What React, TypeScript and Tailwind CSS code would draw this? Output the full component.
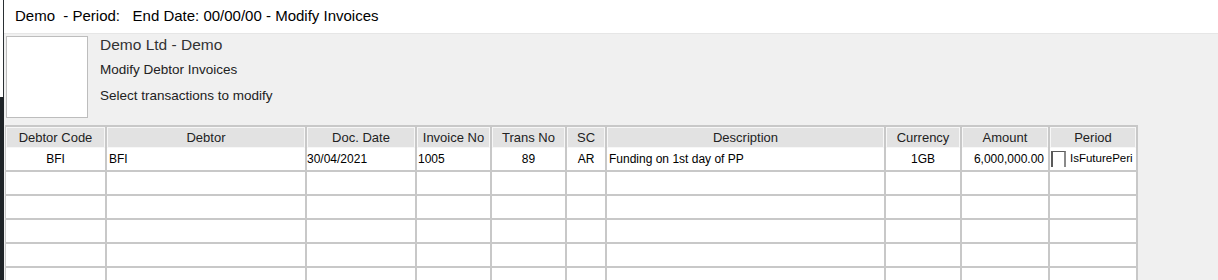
import React from "react";

type Align = "left" | "center" | "right";

const COLS: { label: string; width: number; align: Align; pad: string }[] = [
  { label: "Debtor Code", width: 101, align: "center", pad: "" },
  { label: "Debtor", width: 200, align: "left", pad: "pl-[2px]" },
  { label: "Doc. Date", width: 110, align: "left", pad: "pl-0" },
  { label: "Invoice No", width: 75, align: "left", pad: "pl-[1px]" },
  { label: "Trans No", width: 75, align: "center", pad: "" },
  { label: "SC", width: 40, align: "center", pad: "" },
  { label: "Description", width: 279, align: "left", pad: "pl-[2px]" },
  { label: "Currency", width: 76, align: "center", pad: "" },
  { label: "Amount", width: 88, align: "right", pad: "pr-[4px]" },
  { label: "Period", width: 88, align: "left", pad: "pl-0" },
];

const ROW: React.ReactNode[] = [
  "BFI",
  "BFI",
  "30/04/2021",
  "1005",
  "89",
  "AR",
  "Funding on 1st day of PP",
  "1GB",
  "6,000,000.00",
  null,
];

const alignClass: Record<Align, string> = {
  left: "justify-start",
  center: "justify-center",
  right: "justify-end",
};

function PeriodCell() {
  return (
    <div className="flex items-center gap-[4px] pl-[1px] whitespace-nowrap">
      <span className="block w-[15px] h-[16px] shrink-0 bg-white border-l-2 border-t border-r-2 border-[#5a5a5a] border-r-[#8a8a8a]" />
      <span className="text-[11.5px]">IsFuturePeri</span>
    </div>
  );
}

export default function App() {
  const font = { fontFamily: '"Liberation Sans", Arial, sans-serif' };
  const emptyRows = [0, 1, 2, 3, 4];

  return (
    <div className="flex w-[1218px] h-[280px] overflow-hidden bg-[#f0f0f0]" style={font}>
      {/* window edge */}
      <div className="w-[4px] flex flex-col shrink-0">
        <div className="h-[97px] shrink-0 bg-white border-r border-[#2a2f33]" />
        <div className="flex-1 bg-[#1e2327]" />
      </div>

      <div className="flex-1 flex flex-col min-h-0">
        {/* Title bar */}
        <div className="h-[33px] shrink-0 bg-white flex items-center pl-[11px] text-[15px] text-black whitespace-pre">
          Demo  - Period:   End Date: 00/00/00 - Modify Invoices
        </div>

        {/* Body */}
        <div className="flex-1 min-h-0 overflow-hidden bg-[#f0f0f0] border-t border-[#e6e6e6] pt-[2px] pl-[2px]">
          <div className="flex">
            <div className="w-[82px] h-[82px] shrink-0 bg-white border border-[#bdbdbd]" />
            <div className="ml-[12px] flex flex-col text-[#333]">
              <div className="h-[20px] -mt-[1px] flex items-center text-[15.5px]">Demo Ltd - Demo</div>
              <div className="h-[20px] mt-[5px] flex items-center text-[13.5px] text-[#222]">Modify Debtor Invoices</div>
              <div className="h-[20px] mt-[6px] flex items-center text-[13.5px] text-[#222]">Select transactions to modify</div>
            </div>
          </div>

          {/* Grid */}
          <div className="mt-[7px] -ml-[1px] w-max border-l border-t-2 border-[#c8c8c8]">
            <div className="flex">
              {COLS.map((c) => (
                <div
                  key={c.label}
                  className="h-[21px] border-r-2 border-[#c8c8c8] bg-[#f4f4f4]"
                  style={{ width: c.width }}
                >
                  <div className="h-full border border-[#f7f7f7] bg-[#e2e2e2] flex items-center justify-center text-[13px] text-[#222]">
                    {c.label}
                  </div>
                </div>
              ))}
            </div>
            <div className="flex">
              {COLS.map((c, i) => (
                <div
                  key={c.label}
                  className={`h-[24px] bg-white border-r-2 border-b-2 border-[#c8c8c8] flex items-center text-[12px] text-black overflow-hidden whitespace-nowrap ${alignClass[c.align]} ${c.pad}`}
                  style={{ width: c.width }}
                >
                  {i === 9 ? <PeriodCell /> : ROW[i]}
                </div>
              ))}
            </div>
            {emptyRows.map((r) => (
              <div key={r} className="flex">
                {COLS.map((c) => (
                  <div
                    key={c.label}
                    className="h-[24px] bg-white border-r-2 border-b-2 border-[#c8c8c8]"
                    style={{ width: c.width }}
                  />
                ))}
              </div>
            ))}
          </div>
        </div>
      </div>
    </div>
  );
}
